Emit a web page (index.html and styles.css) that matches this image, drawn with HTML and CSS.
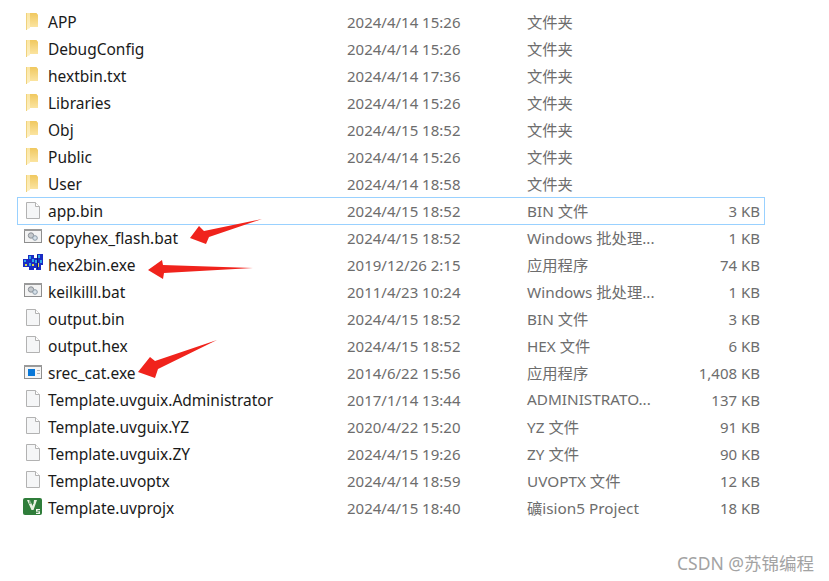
FILE: index.html
```html
<!DOCTYPE html>
<html lang="zh">
<head>
<meta charset="utf-8">
<title>Files</title>
<link rel="stylesheet" href="styles.css">
</head>
<body>
<svg class="defs" width="0" height="0" aria-hidden="true">
  <defs>
    <linearGradient id="fg" x1="0" y1="0" x2="0" y2="1"><stop offset="0" stop-color="#f0c85f"/><stop offset="1" stop-color="#fbe4a0"/></linearGradient>
    <linearGradient id="fl" x1="0" y1="0" x2="0" y2="1"><stop offset="0" stop-color="#fbe6a4"/><stop offset="1" stop-color="#fdf0c4"/></linearGradient>
    <symbol id="folder" viewBox="0 0 22 20">
      <path d="M8 2h6.500l1 1.500H16V16H8z" fill="url(#fg)"/>
      <path d="M4 2h4v15l-4 2z" fill="url(#fl)"/>
      <path d="M4 2h1v17H4z" fill="#f0d27c"/>
    </symbol>
    <symbol id="file" viewBox="0 0 22 20">
      <path d="M4.500 1.500h9l4 4v12h-13z" fill="#f5f6f7" stroke="#b2b2b2"/>
      <path d="M13.500 1.500v4h4" fill="#fff" stroke="#b2b2b2"/>
    </symbol>
    <symbol id="bat" viewBox="0 0 22 20">
      <rect x="2.500" y="2.500" width="17" height="13" fill="#f3f3f3" stroke="#8e8e8e"/>
      <path d="M2 2h18v2H2z" fill="#9a9a9a"/>
      <circle cx="9" cy="8.500" r="2.700" fill="#c6cace" stroke="#8b9096"/>
      <circle cx="13" cy="11" r="2.300" fill="#d6e1ea" stroke="#8b9aa6"/>
    </symbol>
    <symbol id="hexexe" viewBox="0 0 22 20">
      <path d="M1 5h5V1h6v3h3V0h6v11h-2v5h-5v-2h-2v2H7v-3H1z" fill="#1a2cc4"/>
      <path d="M7 2h2v3H7zM10 5h2v3h-2zM16 1h2v3h-2zM2 6h2v2H2zM13 6h2v3h-2zM7 9h2v3H7zM18 6h2v3h-2z" fill="#2fa6e8"/>
      <path d="M3 10h2v2H3zM10 10h2v2h-2zM16 9h1v4h-1z" fill="#dcd64a"/>
      <path d="M15 1h1v14h-1z" fill="#0a1880"/>
    </symbol>
    <symbol id="exe" viewBox="0 0 22 20">
      <rect x="2.500" y="3.500" width="17" height="13" fill="#f5f5f5" stroke="#8e8e8e"/>
      <path d="M2 3h18v2H2z" fill="#9a9a9a"/>
      <path d="M6 7h7v7H6z" fill="#0a78d8"/>
      <path d="M15 8h3v1h-3zM15 11h3v1h-3z" fill="#b6b6b6"/>
    </symbol>
    <symbol id="keil" viewBox="0 0 22 20">
      <rect x="1" y="1" width="19" height="17" rx="2" fill="#2f7d3a"/>
      <path d="M5 3h3l2.500 6L12 3h3l-3.500 10h-2z" fill="#e8f0e0"/>
      <path d="M8 3v4M11 3v4" stroke="#2f7d3a" fill="none"/>
      <path d="M14 12h4v1.300h-2.500v.9H18V17h-4v-1.300h2.500v-.9H14z" fill="#f2f6ee"/>
    </symbol>
  </defs>
</svg>
<main class="list">
  <div class="row"><svg class="ico"><use href="#folder"/></svg><span class="name">APP</span><span class="date">2024/4/14 15:26</span><span class="type">文件夹</span><span class="size"></span></div>
  <div class="row"><svg class="ico"><use href="#folder"/></svg><span class="name">DebugConfig</span><span class="date">2024/4/14 15:26</span><span class="type">文件夹</span><span class="size"></span></div>
  <div class="row"><svg class="ico"><use href="#folder"/></svg><span class="name">hextbin.txt</span><span class="date">2024/4/14 17:36</span><span class="type">文件夹</span><span class="size"></span></div>
  <div class="row"><svg class="ico"><use href="#folder"/></svg><span class="name">Libraries</span><span class="date">2024/4/14 15:26</span><span class="type">文件夹</span><span class="size"></span></div>
  <div class="row"><svg class="ico"><use href="#folder"/></svg><span class="name">Obj</span><span class="date">2024/4/15 18:52</span><span class="type">文件夹</span><span class="size"></span></div>
  <div class="row"><svg class="ico"><use href="#folder"/></svg><span class="name">Public</span><span class="date">2024/4/14 15:26</span><span class="type">文件夹</span><span class="size"></span></div>
  <div class="row"><svg class="ico"><use href="#folder"/></svg><span class="name">User</span><span class="date">2024/4/14 18:58</span><span class="type">文件夹</span><span class="size"></span></div>
  <div class="row focused"><svg class="ico"><use href="#file"/></svg><span class="name">app.bin</span><span class="date">2024/4/15 18:52</span><span class="type">BIN 文件</span><span class="size">3 KB</span></div>
  <div class="row"><svg class="ico"><use href="#bat"/></svg><span class="name">copyhex_flash.bat</span><span class="date">2024/4/15 18:52</span><span class="type">Windows 批处理...</span><span class="size">1 KB</span></div>
  <div class="row"><svg class="ico"><use href="#hexexe"/></svg><span class="name">hex2bin.exe</span><span class="date">2019/12/26 2:15</span><span class="type">应用程序</span><span class="size">74 KB</span></div>
  <div class="row"><svg class="ico"><use href="#bat"/></svg><span class="name">keilkilll.bat</span><span class="date">2011/4/23 10:24</span><span class="type">Windows 批处理...</span><span class="size">1 KB</span></div>
  <div class="row"><svg class="ico"><use href="#file"/></svg><span class="name">output.bin</span><span class="date">2024/4/15 18:52</span><span class="type">BIN 文件</span><span class="size">3 KB</span></div>
  <div class="row"><svg class="ico"><use href="#file"/></svg><span class="name">output.hex</span><span class="date">2024/4/15 18:52</span><span class="type">HEX 文件</span><span class="size">6 KB</span></div>
  <div class="row"><svg class="ico"><use href="#exe"/></svg><span class="name">srec_cat.exe</span><span class="date">2014/6/22 15:56</span><span class="type">应用程序</span><span class="size">1,408 KB</span></div>
  <div class="row"><svg class="ico"><use href="#file"/></svg><span class="name">Template.uvguix.Administrator</span><span class="date">2017/1/14 13:44</span><span class="type">ADMINISTRATO...</span><span class="size">137 KB</span></div>
  <div class="row"><svg class="ico"><use href="#file"/></svg><span class="name">Template.uvguix.YZ</span><span class="date">2020/4/22 15:20</span><span class="type">YZ 文件</span><span class="size">91 KB</span></div>
  <div class="row"><svg class="ico"><use href="#file"/></svg><span class="name">Template.uvguix.ZY</span><span class="date">2024/4/15 19:26</span><span class="type">ZY 文件</span><span class="size">90 KB</span></div>
  <div class="row"><svg class="ico"><use href="#file"/></svg><span class="name">Template.uvoptx</span><span class="date">2024/4/14 18:59</span><span class="type">UVOPTX 文件</span><span class="size">12 KB</span></div>
  <div class="row"><svg class="ico"><use href="#keil"/></svg><span class="name">Template.uvprojx</span><span class="date">2024/4/15 18:40</span><span class="type">礦ision5 Project</span><span class="size">18 KB</span></div>
</main>
<svg class="arrows" width="829" height="581" viewBox="0 0 829 581" aria-hidden="true">
  <path d="M190 238L199 226L204 231L262 219L209 237L206 244Z" fill="#f0231c"/>
  <path d="M148 270L162 260L163 265L253 268L164 273L163 279Z" fill="#f0231c"/>
  <path d="M138 372L150 357L155 361L217 340L158 369L155 378Z" fill="#f0231c"/>
</svg>
<div class="mark">CSDN @苏锦编程</div>
</body>
</html>
```
FILE: styles.css
```css
html, body { margin: 0; padding: 0; background: #fff; }
body {
  position: relative;
  width: 829px;
  height: 581px;
  overflow: hidden;
  font-family: "Noto Sans", "Noto Sans CJK SC", sans-serif;
  font-size: 15px;
}
.defs { position: absolute; }
.list {
  display: flex;
  flex-direction: column;
  width: 746px;
  margin-left: 18px;
  padding-top: 8px;
}
.row {
  display: grid;
  grid-template-columns: 26px 299px 180px 150px 83px;
  align-items: center;
  height: 27px;
  padding-left: 4px;
  box-sizing: border-box;
  width: 746px;
  white-space: nowrap;
}
.focused { box-shadow: 0 0 0 1px #99d1ff; position: relative; height: 26px; margin-top: 1px; }
.ico { width: 22px; height: 20px; display: block; align-self: start; margin-top: 3px; }
.name { color: #1a1a1a; font-size: 15.5px; }
.date, .size { color: #6d6d6d; }
.type { color: #6d6d6d; font-size: 15.3px; margin-top: -2px; }
.size { text-align: right; }
.arrows { position: absolute; left: 0; top: 0; pointer-events: none; }
.mark {
  position: absolute;
  right: 15px;
  top: 550px;
  font-size: 17.500px;
  color: #a3a3a3;
}
```
